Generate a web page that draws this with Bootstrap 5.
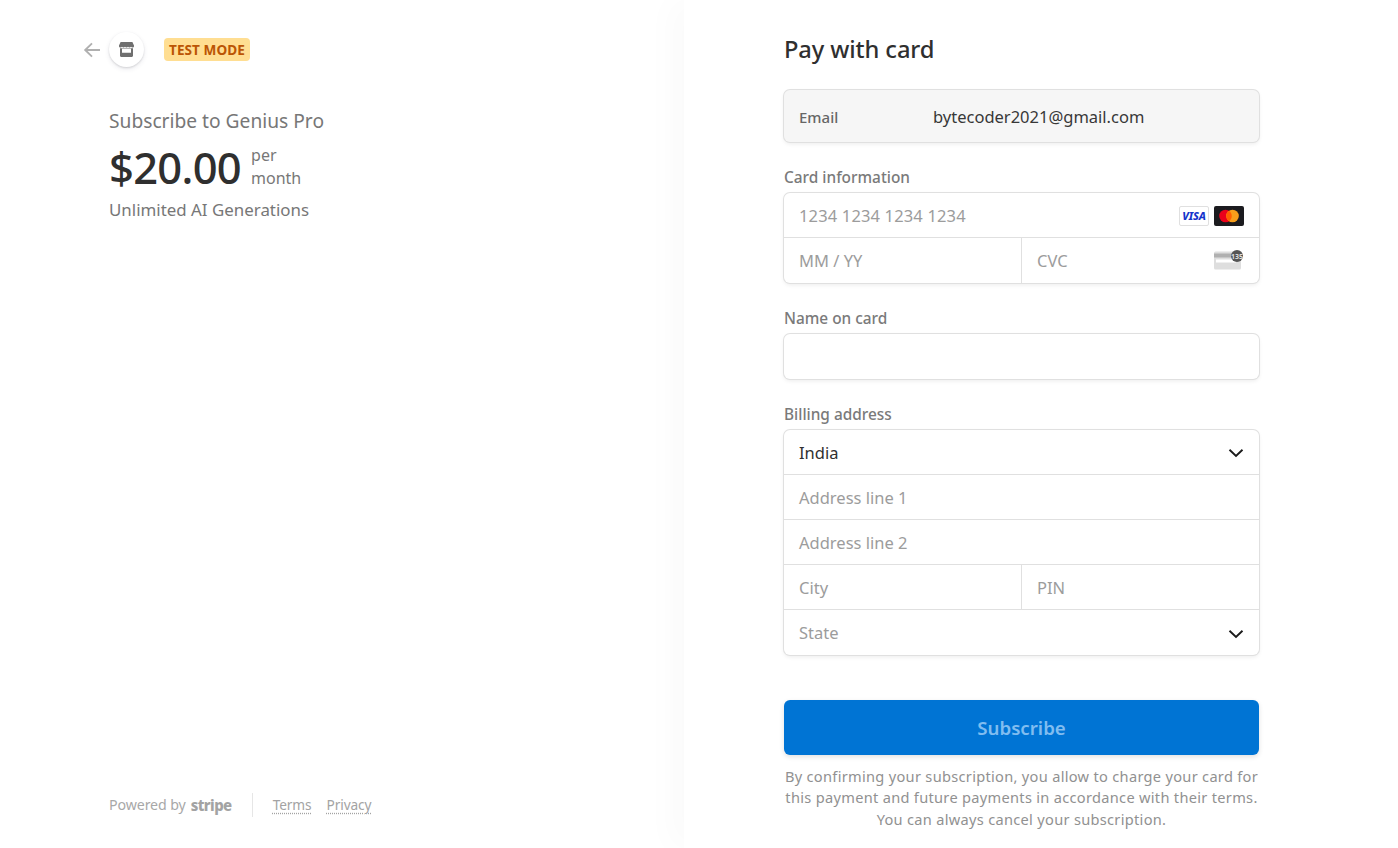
<!DOCTYPE html>
<html lang="en">
<head>
<meta charset="utf-8">
<title>Subscribe to Genius Pro</title>
<link rel="stylesheet" href="https://cdn.jsdelivr.net/npm/bootstrap@5.3.0/dist/css/bootstrap.min.css">
<style>
html,body{height:100%;}
body{font-family:"Noto Sans","Open Sans","Liberation Sans",sans-serif;background:#fff;color:#303030;overflow:hidden;}
.shell{height:848px;}
.side-left{width:684px;flex:none;padding:32px 0 0 83px;}
.side-right{flex:1;padding:0 0 0 100px;box-shadow:-15px 0 30px rgba(0,0,0,.018);}
.head-row{height:35px;}
.back-arrow{width:18px;height:18px;margin-right:8px;}
.shop-dot{width:35px;height:35px;border-radius:50%;background:#fff;box-shadow:0 2px 5px rgba(50,50,93,.1),0 1px 2px rgba(0,0,0,.12);}
.test-tag{margin-left:20px;background:#ffde92;color:#bb5504;font-size:13.6px;font-weight:700;line-height:23px;padding:0 5px;border-radius:4px;letter-spacing:.05px;}
.plan-block{padding:41px 0 0 26px;}
.plan-name{font-size:19.2px;color:#777;line-height:26px;}
.price-row{margin-top:10px;height:46px;}
.price-big{font-size:43.5px;font-weight:500;color:#2f2f2f;line-height:46px;letter-spacing:-.7px;}
.price-unit{font-size:16px;color:#777;line-height:23px;margin-left:10px;}
.plan-note{font-size:16.9px;color:#777;line-height:24px;margin-top:8px;}
.left-col{height:100%;}
.foot-row{margin:auto 0 31px 26px;font-size:14.2px;color:#a8a8a8;height:24px;letter-spacing:-.1px;}
.stripe-word{font-weight:800;font-size:15px;color:#a3a3a3;margin-left:5px;letter-spacing:-.6px;}
.foot-split{width:1px;height:24px;background:#e6e6e6;margin:0 20px;}
.foot-link{color:#a3a3a3;font-size:13.7px;text-decoration:underline dotted;text-underline-offset:3px;margin-right:15px;}
.form-col{width:475px;}
.pay-title{font-size:23.7px;font-weight:500;color:#2f2f2f;line-height:32px;margin:33px 0 25px;letter-spacing:-.1px;}
.box-group{border-radius:6px;box-shadow:0 0 0 1px #e0e0e0,0 2px 4px rgba(0,0,0,.08);background:#fff;margin-bottom:25px;}
.mail-box{height:52px;background:#f6f6f6;padding:2px 15px 0;margin:0 0 25px;}
.mail-label{width:134px;font-size:15px;font-weight:500;color:#666;}
.mail-value{font-size:16.5px;color:#383838;}
.lbl{display:block;font-size:15.4px;font-weight:500;color:#7a7a7a;line-height:22px;margin:0 0 4px;}
.cell{height:44px;padding:2px 15px 0;font-size:16.5px;color:#9c9c9c;}
.cell-tall{height:45px;}
.cell.cell-line{height:45px;}
.cell.cell-tall.cell-line{height:46px;}
.cell-digits{letter-spacing:.15px;}
.cell-line{border-top:1px solid #e0e0e0;}
.cell-half{flex:0 0 237px;}
.cell-half + .cell-half{flex:1 1 0;border-left:1px solid #e0e0e0;}
.cell-value{color:#303030;}
.name-box{height:45px;margin-bottom:25px;}
.icons-end{gap:5px;}
.visa-chip{width:30px;height:20px;border:1px solid #e0e0e0;border-radius:2px;background:#fff;color:#1434cb;font-size:11px;font-weight:800;font-style:italic;line-height:18px;text-align:center;letter-spacing:-.2px;}
.go-btn{width:100%;height:55px;padding:2px 0 0;background:#0074d4;border:0;border-radius:6px;color:#80bdf0;font-size:18.7px;font-weight:600;box-shadow:0 2px 5px rgba(0,0,0,.12);margin-top:20px;}
.go-btn:hover,.go-btn:disabled{background:#0074d4;color:#80bdf0;opacity:1;}
.fine-print{margin-top:11px;font-size:14.6px;line-height:21.4px;color:#919191;text-align:center;letter-spacing:.3px;white-space:nowrap;}
</style>
</head>
<body>
<div class="d-flex shell">
  <div class="side-left">
    <div class="d-flex flex-column left-col">
      <div class="d-flex align-items-center head-row">
        <svg class="back-arrow" viewBox="0 0 18 18" fill="none" stroke="#b0b0b0" stroke-width="1.9"><path d="M17 9H2.2M9 2.4 2.2 9 9 15.6"/></svg>
        <div class="shop-dot d-flex align-items-center justify-content-center">
          <svg width="15" height="15" viewBox="0 0 15 15"><path fill="#6f6f6f" d="M1.6 0h11.8L15 3.4v.8c0 .9-.7 1.4-1.5 1.4-.7 0-1.2-.3-1.5-.8-.3.5-.9.8-1.5.8s-1.2-.3-1.5-.8c-.3.5-.9.8-1.5.8s-1.2-.3-1.5-.8c-.3.5-.9.8-1.5.8s-1.2-.3-1.5-.8c-.3.5-.8.8-1.5.8C.7 5.6 0 5.1 0 4.200v-.8z"/><path fill="#6f6f6f" fill-rule="evenodd" d="M1 6.200h13V13.800c0 .7-.5 1.200-1.200 1.200H2.200C1.500 15 1 14.500 1 13.800zM3 6.800v3.900h9V6.800z"/></svg>
        </div>
        <span class="test-tag">TEST MODE</span>
      </div>
      <div class="plan-block">
        <div class="plan-name">Subscribe to Genius Pro</div>
        <div class="d-flex align-items-center price-row">
          <span class="price-big">$20.00</span>
          <span class="price-unit">per<br>month</span>
        </div>
        <div class="plan-note">Unlimited AI Generations</div>
      </div>
      <div class="d-flex align-items-center foot-row">
        <span>Powered by</span><span class="stripe-word">stripe</span>
        <span class="foot-split"></span>
        <a class="foot-link" href="#">Terms</a>
        <a class="foot-link" href="#">Privacy</a>
      </div>
    </div>
  </div>
  <div class="side-right">
    <div class="form-col">
      <h1 class="pay-title">Pay with card</h1>
      <div class="box-group mail-box d-flex align-items-center">
        <span class="mail-label">Email</span>
        <span class="mail-value">bytecoder2021@gmail.com</span>
      </div>
      <label class="lbl">Card information</label>
      <div class="box-group">
        <div class="cell cell-digits d-flex align-items-center justify-content-between">
          <span>1234 1234 1234 1234</span>
          <span class="d-flex icons-end">
            <span class="visa-chip">VISA</span>
            <svg width="30" height="20" viewBox="0 0 30 20"><rect width="30" height="20" rx="2" fill="#1b1b1f"/><circle cx="11.5" cy="10" r="6.3" fill="#eb001b"/><circle cx="18.5" cy="10" r="6.3" fill="#f79e1b"/><path d="M15 4.800a6.300 6.300 0 0 1 0 10.400 6.300 6.300 0 0 1 0-10.400z" fill="#ff5f00"/></svg>
          </span>
        </div>
        <div class="d-flex cell-line">
          <div class="cell cell-tall cell-half d-flex align-items-center">MM / YY</div>
          <div class="cell cell-tall cell-half d-flex align-items-center justify-content-between">
            <span>CVC</span>
            <svg width="30" height="24" viewBox="0 0 30 24"><rect x="0" y="1.500" width="27" height="18" rx="1.500" fill="#dedede"/><rect x="0" y="3.500" width="27" height="4" fill="#b0b0b0"/><rect x="2" y="9.500" width="20" height="3" fill="#fff"/><circle cx="23" cy="6" r="6" fill="#555"/><text x="23" y="8.500" fill="#ddd" font-size="7" font-weight="700" text-anchor="middle">135</text></svg>
          </div>
        </div>
      </div>
      <label class="lbl">Name on card</label>
      <div class="box-group name-box"></div>
      <label class="lbl">Billing address</label>
      <div class="box-group">
        <div class="cell cell-value d-flex align-items-center justify-content-between">
          <span>India</span>
          <svg width="16" height="16" viewBox="0 0 16 16" fill="none" stroke="#1a1a1a" stroke-width="1.9"><path d="M1.500 4.800 8 11l6.500-6.200"/></svg>
        </div>
        <div class="cell cell-line d-flex align-items-center">Address line 1</div>
        <div class="cell cell-line d-flex align-items-center">Address line 2</div>
        <div class="d-flex cell-line">
          <div class="cell cell-half d-flex align-items-center">City</div>
          <div class="cell cell-half d-flex align-items-center">PIN</div>
        </div>
        <div class="cell cell-tall cell-line d-flex align-items-center justify-content-between">
          <span>State</span>
          <svg width="16" height="16" viewBox="0 0 16 16" fill="none" stroke="#1a1a1a" stroke-width="1.9"><path d="M1.500 4.800 8 11l6.500-6.200"/></svg>
        </div>
      </div>
      <button class="btn go-btn" type="button">Subscribe</button>
      <p class="fine-print">By confirming your subscription, you allow to charge your card for<br>this payment and future payments in accordance with their terms.<br>You can always cancel your subscription.</p>
    </div>
  </div>
</div>
<script src="https://cdn.jsdelivr.net/npm/bootstrap@5.3.0/dist/js/bootstrap.bundle.min.js"></script>
</body>
</html>
